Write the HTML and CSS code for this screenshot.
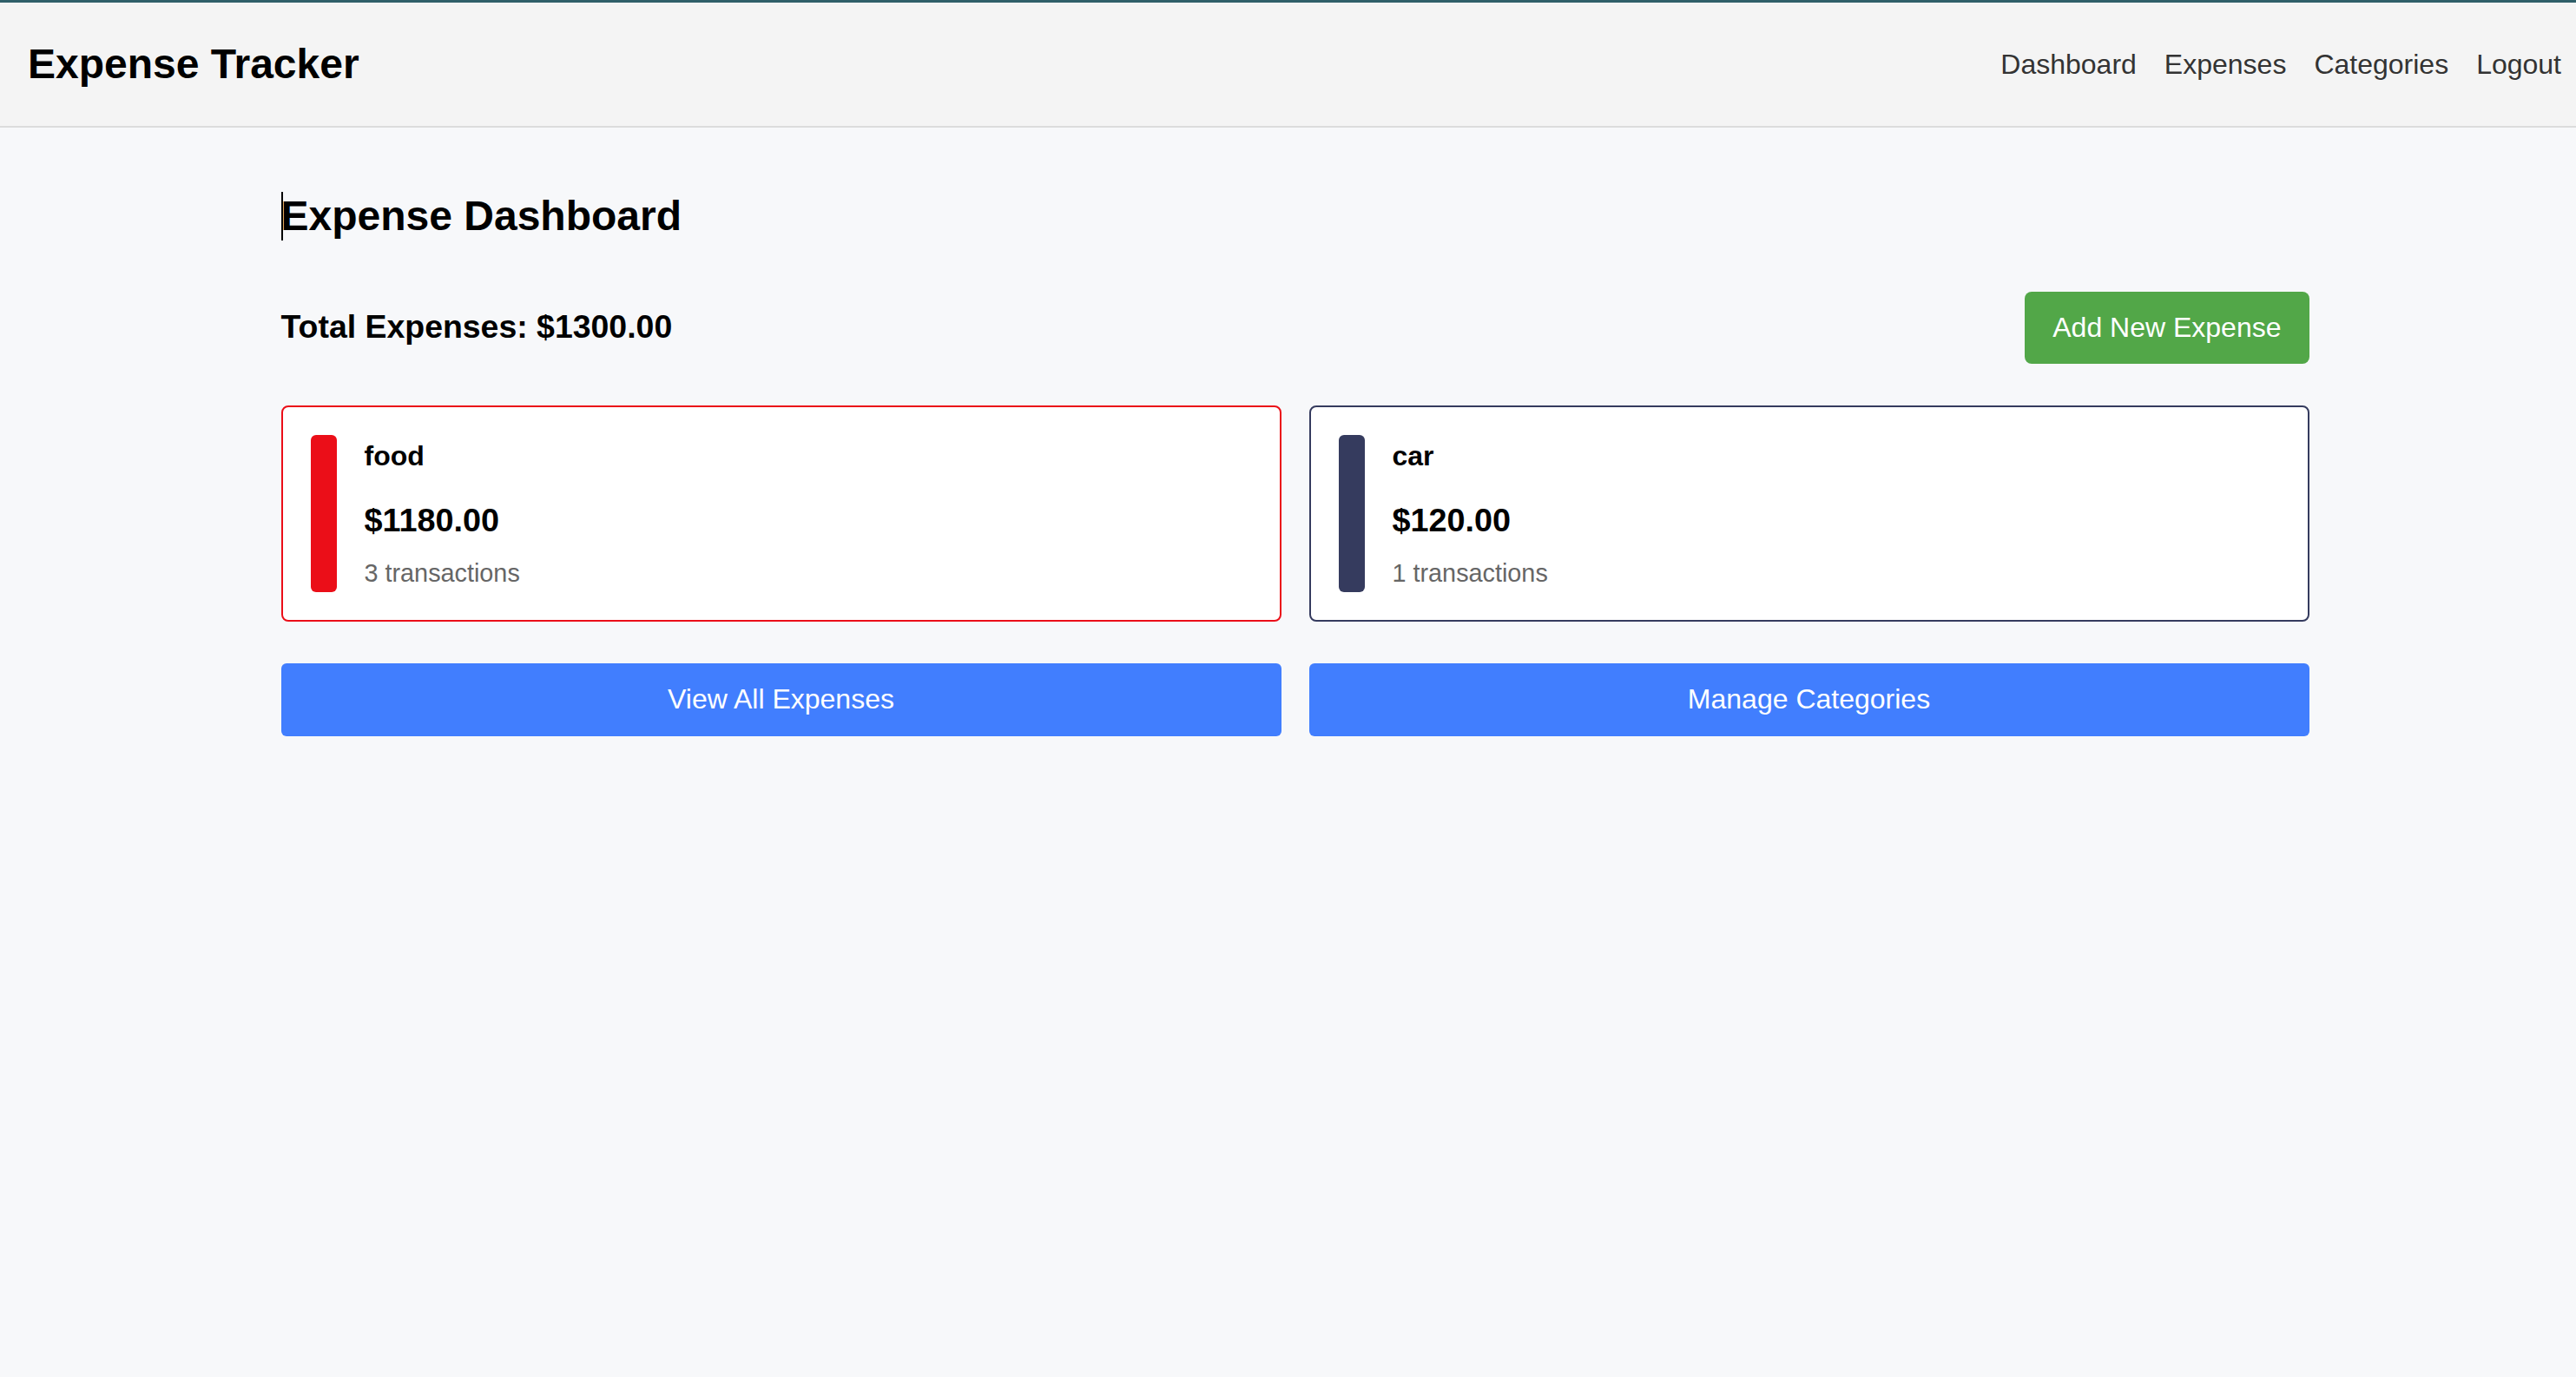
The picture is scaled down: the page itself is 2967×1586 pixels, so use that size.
FILE: index.html
```html
<!DOCTYPE html>
<html lang="en">
<head>
  <meta charset="UTF-8">
  <title>Expense Tracker</title>
  <link rel="stylesheet" href="styles.css">
</head>
<body>

  <header class="topbar">
    <div class="brand">Expense Tracker</div>
    <nav class="nav">
      <a href="#">Dashboard</a>
      <a href="#">Expenses</a>
      <a href="#">Categories</a>
      <a href="#">Logout</a>
    </nav>
  </header>

  <main class="page">
    <div class="container">
      <h2 class="page-title">Expense Dashboard</h2>

      <div class="summary">
        <h3>Total Expenses: $1300.00</h3>
        <a href="#" class="btn-add">Add New Expense</a>
      </div>

      <div class="categories">
        <div class="category" style="--cat: #eb0e18">
          <div class="swatch"></div>
          <div class="category-info">
            <div class="category-name">food</div>
            <div class="category-amount">$1180.00</div>
            <div class="category-count">3 transactions</div>
          </div>
        </div>
        <div class="category" style="--cat: #353b5e">
          <div class="swatch"></div>
          <div class="category-info">
            <div class="category-name">car</div>
            <div class="category-amount">$120.00</div>
            <div class="category-count">1 transactions</div>
          </div>
        </div>
      </div>

      <div class="actions">
        <a href="#">View All Expenses</a>
        <a href="#">Manage Categories</a>
      </div>
    </div>
  </main>

</body>
</html>
```

FILE: styles.css
```css
* {
  margin: 0;
  padding: 0;
  box-sizing: border-box;
}

body {
  background: #f7f8fa;
  font-family: "Liberation Sans", Arial, sans-serif;
  color: #000;
}

/* top bar */
.topbar {
  display: flex;
  justify-content: space-between;
  align-items: center;
  height: 147px;
  padding: 0 17px 0 32px;
  background: #f4f4f4;
  border-top: 3px solid #2f5f69;
  border-bottom: 2px solid #dcdcdc;
}

.brand {
  font-size: 48px;
  line-height: 56px;
  font-weight: bold;
}

.nav {
  display: flex;
  gap: 32px;
}

.nav a {
  font-size: 32px;
  line-height: 37px;
  color: #333;
  text-decoration: none;
}

/* main */
.page {
  padding: 73.5px 0 0 16px;
}

.container {
  max-width: 2336px;
  margin: 0 auto;
}

.page-title {
  font-size: 48px;
  line-height: 56px;
  box-shadow: inset 2px 0 0 #000;
}

.summary {
  display: flex;
  justify-content: space-between;
  align-items: center;
  margin-top: 59.5px;
}

.summary h3 {
  font-size: 37.44px;
  line-height: 43px;
  margin-bottom: 3px;
}

.btn-add {
  background: #52a748;
  color: #fff;
  font-size: 32px;
  line-height: 37px;
  padding: 23px 32px;
  border-radius: 8px;
  text-decoration: none;
}

/* category cards */
.categories {
  display: grid;
  grid-template-columns: 1fr 1fr;
  gap: 32px;
  margin-top: 48px;
}

.category {
  display: flex;
  gap: 32px;
  padding: 32px;
  background: #fff;
  border: 2px solid var(--cat);
  border-radius: 8px;
}

.swatch {
  flex: none;
  width: 30px;
  border-radius: 6px;
  background: var(--cat);
}

.category-name {
  font-size: 32px;
  line-height: 48px;
  font-weight: bold;
}

.category-amount {
  font-size: 37.8px;
  line-height: 56px;
  font-weight: bold;
  margin: 21.6px 0 12.7px;
}

.category-count {
  font-size: 28.8px;
  line-height: 43.2px;
  color: #666;
}

/* bottom buttons */
.actions {
  display: grid;
  grid-template-columns: 1fr 1fr;
  gap: 32px;
  margin-top: 47.7px;
}

.actions a {
  display: block;
  text-align: center;
  background: #417efe;
  color: #fff;
  font-size: 32px;
  line-height: 37.7px;
  padding: 23px;
  border-radius: 6px;
  text-decoration: none;
}
```
